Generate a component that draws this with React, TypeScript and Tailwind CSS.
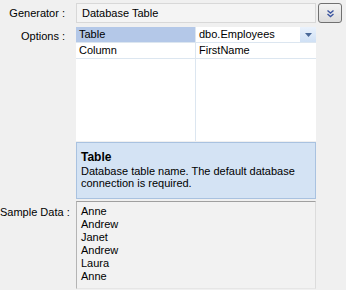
import React from 'react'

const rows = [
  { name: 'Table', value: 'dbo.Employees', selected: true },
  { name: 'Column', value: 'FirstName', selected: false },
]

const samples = ['Anne', 'Andrew', 'Janet', 'Andrew', 'Laura', 'Anne']

export default function App() {
  return (
    <div
      className="w-[346px] h-[290px] bg-[#f0f0f0] text-[11px] text-black overflow-hidden"
      style={{ fontFamily: '"Liberation Sans", Arial, sans-serif' }}
    >
      {/* Generator */}
      <div className="flex items-center pt-[3px] h-[23px]">
        <div className="w-[76px] pr-[11px] text-right whitespace-nowrap">Generator :</div>
        <div className="w-[240px] h-[20px] border border-[#d8d8d8] bg-[#f4f4f4] flex items-center pl-[5px]">
          Database Table
        </div>
        <button className="ml-[2px] w-[24px] h-[20px] rounded-[3px] border border-[#707070] bg-gradient-to-b from-[#f2f2f2] to-[#dcdcdc] flex items-center justify-center">
          <svg width="9" height="9" viewBox="0 0 9 9">
            <path d="M1.5 1.5 L4.5 4 L7.5 1.5 M1.5 5 L4.5 7.5 L7.5 5" fill="none" stroke="#3b55a0" strokeWidth="1.4" />
          </svg>
        </button>
      </div>

      {/* Options */}
      <div className="flex mt-[4px]">
        <div className="w-[76px] pr-[11px] text-right h-[16px] leading-[18px] whitespace-nowrap">Options :</div>
        <div className="w-[240px] flex flex-col">
          <div className="h-[114px] bg-white relative">
            {rows.map((r) => (
              <div key={r.name} className="flex h-[16px] border-b border-[#dce6f0]">
                <div className={`w-[119px] pl-[3px] leading-[15px] ${r.selected ? 'bg-[#b4c8e8]' : ''}`}>{r.name}</div>
                <div className="flex-1 border-l border-[#dce6f0] flex">
                  <div className="flex-1 pl-[3px] leading-[15px]">{r.value}</div>
                  {r.selected && (
                    <div className="w-[16px] bg-gradient-to-b from-[#eaf2fc] to-[#cfe0f5] flex items-center justify-center">
                      <svg width="7" height="4" viewBox="0 0 7 4">
                        <path d="M0 0 H7 L3.5 4 Z" fill="#4a6898" />
                      </svg>
                    </div>
                  )}
                </div>
              </div>
            ))}
            <div className="absolute left-[119px] top-[32px] bottom-0 border-l border-[#dce6f0]" />
          </div>

          <div className="mt-[1px] h-[57px] border border-[#a9c2e0] bg-[#d4e3f4] px-[4px] pt-[7px]">
            <div className="font-bold text-[12px] leading-[15px]">Table</div>
            <div className="leading-[12px]">
              Database table name. The default database connection is required.
            </div>
          </div>
        </div>
      </div>

      {/* Sample Data */}
      <div className="flex mt-[2px]">
        <div className="w-[76px] pr-[11px] text-right pt-[3px] whitespace-nowrap">Sample Data :</div>
        <div className="w-[240px] h-[88px] border border-t-[#a0a0a0] border-l-[#b4b4b4] border-r-[#dcdcdc] border-b-[#e6e6e6] bg-[#f2f2f2] pl-[4px] pt-[3px] leading-[13px]">
          {samples.map((s, i) => (
            <div key={i}>{s}</div>
          ))}
        </div>
      </div>
    </div>
  )
}
